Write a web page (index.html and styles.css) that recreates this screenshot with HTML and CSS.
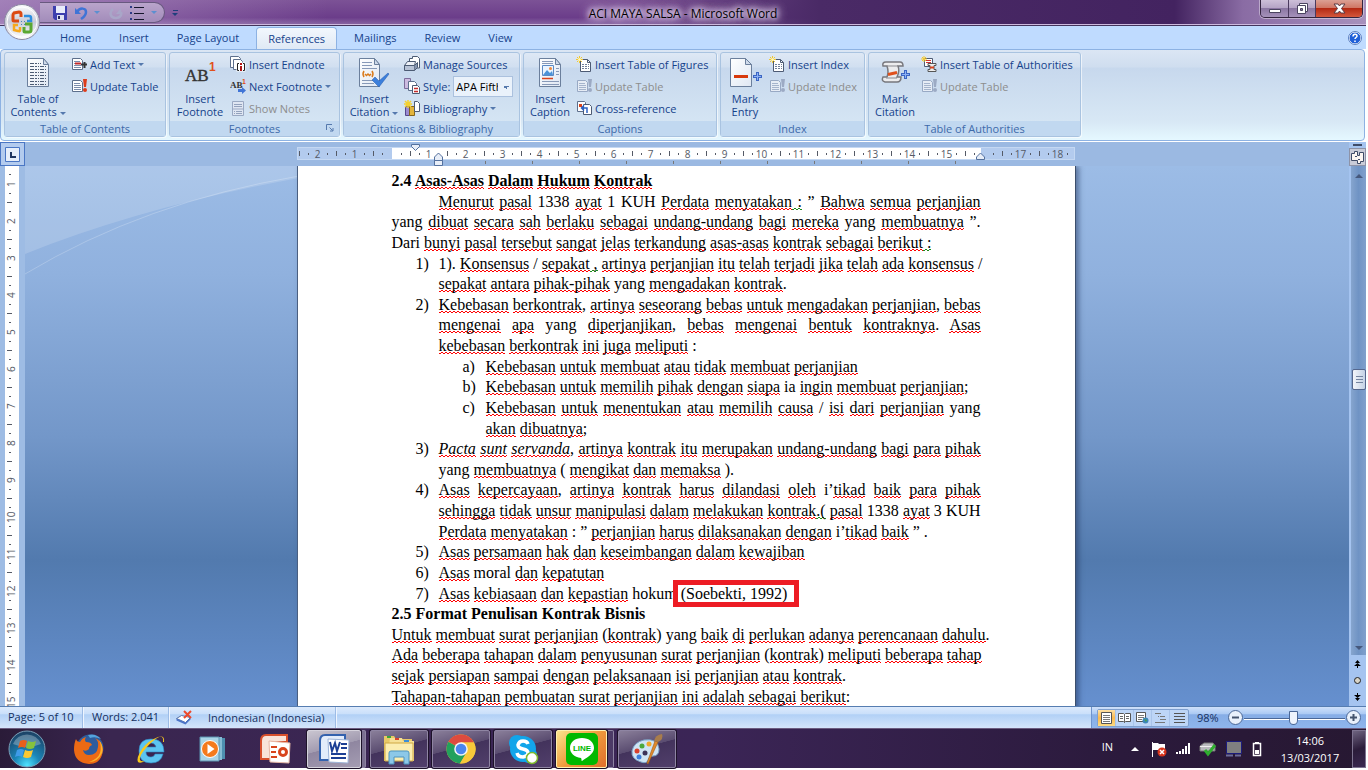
FILE: index.html
```html
<!DOCTYPE html>
<html lang="id">

<head>
    <meta charset="UTF-8">
    <meta name="viewport" content="width=device-width, initial-scale=1.0">
    <title>ACI MAYA SALSA - Microsoft Word</title>
    <link rel="stylesheet" href="styles.css">
</head>

<body>
    <svg class="defs" aria-hidden="true">
        <defs>
            <linearGradient id="g-orb" x1="0" y1="0" x2="0" y2="1">
                <stop offset="0" stop-color="#fdfdfe" /><stop offset=".5" stop-color="#c9ccd8" /><stop offset="1" stop-color="#fff" />
            </linearGradient>
            <radialGradient id="g-start" cx=".5" cy=".95" r=".9">
                <stop offset="0" stop-color="#4fe3ff" /><stop offset=".4" stop-color="#1a86b8" /><stop offset="1" stop-color="#1c4468" />
            </radialGradient>
            <linearGradient id="g-paper" x1="0" y1="0" x2="1" y2="1">
                <stop offset="0" stop-color="#fff" /><stop offset="1" stop-color="#dfe7f3" />
            </linearGradient>
        </defs>
        <symbol id="i-doc32" viewBox="0 0 32 32">
            <path d="M5.500 1.500h16l5 6v22h-21z" fill="url(#g-paper)" stroke="#6b7f9c" />
            <path d="M21.500 1.500v6h5z" fill="#cfdaea" stroke="#6b7f9c" />
        </symbol>
        <symbol id="i-page" viewBox="0 0 16 16">
            <path d="M1.500 2.500h8l2 2v9h-10z" fill="#fff" stroke="#5d6f8c" />
            <path d="M3 5.500h6M3 7.500h7M3 9.500h7M3 11.500h7" stroke="#7b8cab" />
        </symbol>
        <symbol id="i-update" viewBox="0 0 16 16">
            <use href="#i-page" width="16" height="16" />
            <path d="M12 1h4l-1 8h-2z" fill="#dd3c1c" /><circle cx="14" cy="12" r="2" fill="#dd3c1c" />
        </symbol>
        <symbol id="i-update-off" viewBox="0 0 16 16">
            <path d="M1.500 2.500h8l2 2v9h-10z" fill="#e6ecf5" stroke="#98a9c4" />
            <path d="M3 5.500h6M3 7.500h7M3 9.500h7M3 11.500h7" stroke="#a5b4cc" />
            <path d="M12 1h4l-1 8h-2z" fill="#9caac4" /><circle cx="14" cy="12" r="2" fill="#9caac4" />
        </symbol>
        <symbol id="i-newdoc" viewBox="0 0 16 16">
            <path d="M4.500 3.500h7l3 3v9h-10z" fill="#fff" stroke="#4d5b74" />
            <path d="M11.500 3.500v3h3" fill="none" stroke="#4d5b74" />
            <path d="M6 8.500h7M6 10.500h7M6 12.500h7" stroke="#6f7f99" stroke-dasharray="2 1" />
            <path d="M3.500 0v7M0 3.500h7M1 1l5 5M6 1L1 6" stroke="#f4c92f" /><circle cx="3.500" cy="3.500" r="1.500" fill="#fff7b8" />
        </symbol>
    </svg>

    <header class="titlebar">
        <div class="quick">
            <button type="button" aria-label="Save"><svg width="16" height="16" viewBox="0 0 16 16"><path d="M1 1h14v14H3l-2-2z" fill="#3c3fae" /><path d="M4 1h9v7H4z" fill="#e8ecfa" /><path d="M5 10h7v5H5z" fill="#dfe3f2" /><path d="M6 11h2v3H6z" fill="#23245f" /></svg></button>
            <button type="button" aria-label="Undo"><svg width="14" height="16" viewBox="0 0 14 16"><path d="M1 3v6h6z" fill="#3f74d6" /><path d="M3 7c3-5 9-4 9 0 0 3-2 5-5 7" fill="none" stroke="#3f74d6" stroke-width="2.500" /></svg></button>
            <i class="caret pale"></i>
            <button type="button" aria-label="Repeat"><svg width="14" height="16" viewBox="0 0 14 16"><path d="M12 3v6H7z" fill="#a9a6c8" /><path d="M4 4c-4 3-3 9 3 9 4 0 6-3 5-6" fill="none" stroke="#a9a6c8" stroke-width="2.500" /></svg></button>
            <button type="button" aria-label="Bullets"><svg width="16" height="16" viewBox="0 0 16 16"><path d="M5 2.500h10M5 8.500h10M5 14.500h10" stroke="#15152b" /><path d="M1 1h2v2H1zM1 7h2v2H1zM1 13h2v2H1z" fill="#2c3a86" /></svg></button>
            <i class="caret pale"></i>
        </div>
        <button type="button" class="quick-more" aria-label="Customize"><i></i><i class="caret dark"></i></button>
        <div class="title">ACI MAYA SALSA - Microsoft Word</div>
        <div class="winbtns">
            <button type="button" class="min" aria-label="Minimize"><svg width="12" height="16" viewBox="0 0 12 16"><path d="M.5 8.500h11v3H.5z" fill="#fff" stroke="#4b4460" /></svg></button>
            <button type="button" class="max" aria-label="Restore"><svg width="13" height="16" viewBox="0 0 13 16"><path d="M3.500 2.500h8v8h-8z" fill="#fff" stroke="#4b4460" /><path d="M1.500 4.500h8v8h-8z" fill="#fff" stroke="#4b4460" /><path d="M4.500 7.500h2v2h-2z" fill="#8b7aa4" stroke="#4b4460" /></svg></button>
            <button type="button" class="close" aria-label="Close"><svg width="13" height="16" viewBox="0 0 13 16"><path d="M1 3h4l1.500 2L8 3h4L8.500 7.500 12 12H8L6.500 10 5 12H1l3.500-4.500z" fill="#fff" stroke="#5a3a44" /></svg></button>
        </div>
    </header>

    <button type="button" class="office" aria-label="Office">
        <svg width="38" height="38" viewBox="0 0 38 38">
            <circle cx="19" cy="19" r="17.500" fill="url(#g-orb)" stroke="#8a87a0" />
            <circle cx="19" cy="19" r="15" fill="none" stroke="#fff" />
            <path d="M16 18h-5q-1 0-1-1v-5q0-1 1-2l5-1q2 0 2 2v3" fill="none" stroke="#dc4a12" stroke-width="3" />
            <path d="M21 13h5q2 0 2 2v3h-4" fill="none" stroke="#2e8fe0" stroke-width="2.500" />
            <path d="M17 24v3q0 2-2 1l-4-1v-5h4" fill="none" stroke="#f6a81c" stroke-width="2.500" />
            <path d="M22 21h6v6q0 2-2 2h-4q-1 0-1-1v-4" fill="none" stroke="#5aa832" stroke-width="3" />
            <path d="M18 18h1v1h-1zM21 18h1v1h-1zM18 21h1v1h-1zM21 21h1v1h-1z" fill="#4b83b8" />
        </svg>
    </button>

    <nav class="tabs">
        <button type="button">Home</button>
        <button type="button">Insert</button>
        <button type="button">Page Layout</button>
        <button type="button" class="active">References</button>
        <button type="button">Mailings</button>
        <button type="button">Review</button>
        <button type="button">View</button>
        <button type="button" class="help" aria-label="Help"><svg width="14" height="14" viewBox="0 0 14 14"><circle cx="7" cy="7" r="6" fill="#1f5fd8" stroke="#fff" /><circle cx="7" cy="7" r="6.500" fill="none" stroke="#5b7fc0" /><path d="M5 5.500c0-3 4-3 4-.5 0 1.500-2 1.500-2 3M7 9.500V11" fill="none" stroke="#fff" stroke-width="1.500" /></svg></button>
    </nav>

    <section class="ribbon">
        <div class="group toc">
            <div class="tools">
                <button type="button" class="big">
                    <svg width="32" height="32" viewBox="0 0 32 32"><use href="#i-doc32" width="32" height="32" /><path d="M8 6.500h11M8 9.500h16M8 12.500h16M8 15.500h16M8 18.500h16M8 21.500h16M8 24.500h16M8 27.500h16" stroke="#4c5b73" stroke-dasharray="4 1 2 1 1 1" /></svg>
                    <span>Table of<br>Contents <i class="caret"></i></span>
                </button>
                <div class="small">
                    <button type="button"><svg width="16" height="16"><use href="#i-page" /><path d="M4 7.500h6" stroke="#c32b2b" stroke-width="2" /><path d="M10 8.500h6M13.500 6v6" stroke="#333" stroke-width="2" /></svg>Add Text <i class="caret"></i></button>
                    <button type="button"><svg width="16" height="16"><use href="#i-update" /></svg>Update Table</button>
                </div>
            </div>
            <div class="label">Table of Contents</div>
        </div>

        <div class="group footnotes">
            <div class="tools">
                <button type="button" class="big">
                    <svg width="32" height="32" viewBox="0 0 32 32"><text x="1" y="24" class="ab">AB</text><text x="25" y="14" class="one">1</text></svg>
                    <span>Insert<br>Footnote</span>
                </button>
                <div class="small">
                    <button type="button"><svg width="16" height="16"><path d="M.5.500h8l2 2v9H.5z" fill="#fff" stroke="#5d6f8c" /><path d="M3.500 3.500h7l2 2v8h-9z" fill="#fff" stroke="#5d6f8c" /><path d="M6.500 6.500h9v9h-9z" fill="#fff" /><path d="M9 7.500H7.500v7H9M13 7.500h1.500v7H13" fill="none" stroke="#222" /><path d="M11 7v2M11 10v5" stroke="#b01515" stroke-width="2" /></svg>Insert Endnote</button>
                    <button type="button"><svg width="16" height="16"><text x="0" y="10" class="ab-s">AB</text><text x="12" y="6" class="one-s">1</text><path d="M8 11h4V9l4 3.500-4 3.500v-2H8z" fill="#3f74d6" /></svg>Next Footnote <i class="caret"></i></button>
                    <button type="button" disabled><svg width="16" height="16"><path d="M2.500 1.500h11v14h-11z" fill="#dfe6f2" stroke="#9aa9c3" /><path d="M4 4.500h8M4 6.500h8M4 11.500h1M6 11.500h6M4 13.500h1M6 13.500h6" stroke="#93a2bd" /><path d="M3 9h10" stroke="#9aa9c3" /></svg>Show Notes</button>
                </div>
            </div>
            <div class="label">Footnotes<button type="button" class="launcher" aria-label="Footnotes dialog"><svg width="8" height="8" viewBox="0 0 8 8"><path d="M.5 6V.500H6M3.500 3.500l3 3M7 4v3H4" fill="none" stroke="#5579ad" /></svg></button></div>
        </div>

        <div class="group citations">
            <div class="tools">
                <button type="button" class="big">
                    <svg width="32" height="32" viewBox="0 0 32 32"><path d="M1.500 1.500h15l5 6v22h-20z" fill="url(#g-paper)" stroke="#6b7f9c" /><path d="M16.500 1.500v6h5z" fill="#cfdaea" stroke="#6b7f9c" /><path d="M4 5.500h10M4 8.500h10M4 11.500h15M4 23.500h12M4 26.500h12" stroke="#8799b8" /><path d="M6 14q-2 3 0 6M14 14q2 3 0 6M7 17l1.500 1.500L10 17l1.500 1.500L13 17" fill="none" stroke="#d97a1c" stroke-width="1.500" /><path d="M14 23l3-3 4 4 9-8 1 1-10 13z" fill="#3c7fdc" stroke="#2358a8" stroke-width=".5" /></svg>
                    <span>Insert<br>Citation <i class="caret"></i></span>
                </button>
                <div class="small">
                    <button type="button"><svg width="16" height="16"><path d="M5.500 5V2.500h3v-2h5l2 2V12h-4" fill="#fff" stroke="#4c5b73" /><path d="M.5 9.500l3-4h8l-1 4z" fill="#eef1f7" stroke="#4c5b73" /><path d="M.5 9.500h10v5H.5z" fill="#b8c3d6" stroke="#4c5b73" /><path d="M10.500 9.500l3-3v5l-3 3" fill="#8796b0" stroke="#4c5b73" /></svg>Manage Sources</button>
                    <div class="style-row">
                        <label for="cite-style"><svg width="16" height="16"><path d="M.5.500h6v10h-6z" fill="#cdbbe0" stroke="#7d6c9b" /><path d="M4.500 3.500h6l2 2v7h-8z" fill="#fff" stroke="#5d6f8c" /><path d="M8.500 7.500h5l2 2v6h-7z" fill="#fff" stroke="#4d5b74" /><path d="M10 10.500h4M10 13.500h4" stroke="#c32b2b" stroke-width="1.500" /></svg>Style:</label>
                        <select id="cite-style"><option>APA Fifth Edition</option></select>
                    </div>
                    <button type="button"><svg width="16" height="16"><path d="M1.500 6.500h4v9h-4z" fill="#9a8bd0" stroke="#55488c" /><path d="M5.500 6.500h5v9h-5z" fill="#e3b53c" stroke="#86651a" /><path d="M10.500 1.500h3l2 2v8h-5z" fill="#fff" stroke="#4d5b74" /><path d="M4 0v8M0 4h8M1 1l6 6M7 1L1 7" stroke="#f4d12f" stroke-width="1.500" /></svg>Bibliography <i class="caret"></i></button>
                </div>
            </div>
            <div class="label">Citations &amp; Bibliography</div>
        </div>

        <div class="group captions">
            <div class="tools">
                <button type="button" class="big">
                    <svg width="32" height="32" viewBox="0 0 32 32"><use href="#i-doc32" width="32" height="32" /><path d="M8 4.500h11M8 6.500h11M22 11.500h3M22 14.500h3M22 17.500h3M8 24.500h17M8 27.500h17" stroke="#8799b8" /><path d="M8.500 8.500h11v10h-11z" fill="#eaf4ff" stroke="#5c8ac4" /><path d="M9 18l4-5 3 3 2-2 1 4z" fill="#4c93d8" /><circle cx="16.500" cy="11.500" r="1.500" fill="#f08a3c" /><path d="M8 21.500h11" stroke="#d8431c" stroke-width="1.500" /></svg>
                    <span>Insert<br>Caption</span>
                </button>
                <div class="small">
                    <button type="button"><svg width="16" height="16"><use href="#i-newdoc" /></svg>Insert Table of Figures</button>
                    <button type="button" disabled><svg width="16" height="16"><use href="#i-update-off" /></svg>Update Table</button>
                    <button type="button"><svg width="16" height="16"><path d="M1.500 1.500h7l1 1v9h-8z" fill="#fff" stroke="#5d6f8c" /><path d="M3 4h3v3H3z" fill="#d8431c" /><path d="M7.500 4.500h6l2 2v8h-8z" fill="#fff" stroke="#4d5b74" /><path d="M6 8h5v5M8 5.500L5.500 8 8 10.500" fill="none" stroke="#2b62c4" stroke-width="1.500" /></svg>Cross-reference</button>
                </div>
            </div>
            <div class="label">Captions</div>
        </div>

        <div class="group index">
            <div class="tools">
                <button type="button" class="big">
                    <svg width="34" height="32" viewBox="0 0 34 32"><path d="M2.500 1.500h15l6 6v22h-21z" fill="url(#g-paper)" stroke="#6b7f9c" /><path d="M17.500 1.500v6h6z" fill="#cfdaea" stroke="#6b7f9c" /><path d="M6 19.500h14" stroke="#d8390c" stroke-width="3" /><path d="M25 19.500h9M29.500 15v9" stroke="#3c66c4" stroke-width="3" /><path d="M26 19.500h7M29.500 16v7" stroke="#8db1f4" /></svg>
                    <span>Mark<br>Entry</span>
                </button>
                <div class="small">
                    <button type="button"><svg width="16" height="16"><use href="#i-newdoc" /></svg>Insert Index</button>
                    <button type="button" disabled><svg width="16" height="16"><use href="#i-update-off" /></svg>Update Index</button>
                </div>
            </div>
            <div class="label">Index</div>
        </div>

        <div class="group authorities">
            <div class="tools">
                <button type="button" class="big">
                    <svg width="32" height="32" viewBox="0 0 32 32"><path d="M4 9q-1-4 3-4h14q3 0 3 4h-5q2 5-1 11h4q0 5-4 5H6q-4-1-2-5h4q2-5 0-11z" fill="#ececee" stroke="#77777d" stroke-width="1.500" /><path d="M8 9h11M7 21h11" stroke="#8a8a90" /><path d="M9 17.500l9-2" stroke="#e0501c" stroke-width="3" /><path d="M22 17.500h9M26.500 13v9" stroke="#3c66c4" stroke-width="3" /><path d="M23 17.500h7M26.500 14v7" stroke="#8db1f4" /></svg>
                    <span>Mark<br>Citation</span>
                </button>
                <div class="small">
                    <button type="button"><svg width="16" height="16"><path d="M3.500 2.500h8v8h-8z" fill="#fff" stroke="#4d5b74" /><path d="M5 4.500h5M5 6.500h5" stroke="#c33" /><path d="M7 7.500h8v2h-2v4h2v2H7v-2h2v-4H7z" fill="#eee" stroke="#555" /><path d="M9 11.500h4" stroke="#d8431c" stroke-width="2" /><path d="M3 0v6M0 3h6M1 1l4 4M5 1L1 5" stroke="#f4c92f" /></svg>Insert Table of Authorities</button>
                    <button type="button" disabled><svg width="16" height="16"><use href="#i-update-off" /></svg>Update Table</button>
                </div>
            </div>
            <div class="label">Table of Authorities</div>
        </div>
    </section>

    <main class="workspace">
        <div class="left-col">
            <button type="button" class="tab-type" aria-label="Left tab"><svg width="15" height="15" viewBox="0 0 15 15"><path d="M.5.500h14v14H.5z" fill="#e6eefa" stroke="#4a76c4" /><path d="M5 5h2v4h4v2H5z" fill="#1f3560" /></svg></button>
            <div class="vruler"></div>
        </div>
        <div class="mid-col">
            <div class="hruler-row">
                <div class="hruler">
                    <div class="cells"></div>
                    <svg class="stop first" width="9" height="7" viewBox="0 0 9 7"><path d="M.5.500h8v2l-4 4-4-4z" fill="#e8eef8" stroke="#54719e" /></svg>
                    <svg class="stop hanging" width="9" height="14" viewBox="0 0 9 14"><path d="M.5 8.500V5l4-4 4 4v3.500zM.5 8.500h8v5h-8z" fill="#e8eef8" stroke="#54719e" /></svg>
                    <svg class="stop right" width="9" height="8" viewBox="0 0 9 8"><path d="M.5 7.500V5l4-4 4 4v2.500z" fill="#e8eef8" stroke="#54719e" /></svg>
                </div>
            </div>
            <div class="canvas">
                <svg class="swoosh" viewBox="0 0 274 120" preserveAspectRatio="none" aria-hidden="true">
                    <path d="M0 0H274V12Q120 40 0 88z" fill="#fff" opacity=".16" />
                    <path d="M0 108Q120 36 274 10" fill="none" stroke="#fff" opacity=".22" />
                </svg>
                <article class="page">
                    <h2>2.4 Asas-Asas Dalam Hukum Kontrak</h2>
                    <p>
                        <span class="line full first-line">Menurut pasal 1338 ayat 1 KUH Perdata menyatakan<u class="gr"> :</u> ” Bahwa semua perjanjian</span>
                        <span class="line full">yang dibuat secara sah berlaku sebagai undang-undang bagi mereka yang membuatnya ”.</span>
                        <span class="line">Dari bunyi pasal tersebut sangat jelas terkandung asas-asas kontrak sebagai berikut<u class="gr"> :</u></span>
                    </p>
                    <div class="list">
                        <div class="item"><span class="num">1)</span>
                            <p><span class="line full">1). Konsensus / sepakat<u class="gr"> ,</u> artinya perjanjian itu telah terjadi jika telah ada konsensus /</span>
                                <span class="line">sepakat antara pihak-pihak yang mengadakan kontrak.</span></p>
                        </div>
                        <div class="item"><span class="num">2)</span>
                            <p><span class="line full">Kebebasan berkontrak, artinya seseorang bebas untuk mengadakan perjanjian, bebas</span>
                                <span class="line full">mengenai apa yang diperjanjikan, bebas mengenai bentuk kontraknya. Asas</span>
                                <span class="line">kebebasan berkontrak ini juga meliputi :</span></p>
                        </div>
                        <div class="list sub">
                            <div class="item"><span class="num">a)</span><p><span class="line">Kebebasan untuk membuat atau tidak membuat perjanjian</span></p></div>
                            <div class="item"><span class="num">b)</span><p><span class="line">Kebebasan untuk memilih pihak dengan siapa ia ingin membuat perjanjian;</span></p></div>
                            <div class="item"><span class="num">c)</span>
                                <p><span class="line full">Kebebasan untuk menentukan atau memilih causa / isi dari perjanjian yang</span>
                                    <span class="line">akan dibuatnya;</span></p>
                            </div>
                        </div>
                        <div class="item"><span class="num">3)</span>
                            <p><span class="line full"><em>Pacta sunt servanda</em>, artinya kontrak itu merupakan undang-undang bagi para pihak</span>
                                <span class="line">yang membuatnya ( mengikat dan memaksa ).</span></p>
                        </div>
                        <div class="item"><span class="num">4)</span>
                            <p><span class="line full">Asas kepercayaan, artinya kontrak harus dilandasi oleh i’tikad baik para pihak</span>
                                <span class="line full">sehingga tidak unsur manipulasi dalam melakukan kontrak<u class="gr">.(</u> pasal 1338 ayat 3 KUH</span>
                                <span class="line">Perdata menyatakan : ” perjanjian harus dilaksanakan dengan i’tikad baik ” .</span></p>
                        </div>
                        <div class="item"><span class="num">5)</span><p><span class="line">Asas persamaan hak dan keseimbangan dalam kewajiban</span></p></div>
                        <div class="item"><span class="num">6)</span><p><span class="line">Asas moral dan kepatutan</span></p></div>
                        <div class="item"><span class="num">7)</span><p><span class="line">Asas kebiasaan dan kepastian hokum <span class="boxed nospell">(Soebekti, 1992)</span></span></p></div>
                    </div>
                    <h2 class="nospell">2.5 Format Penulisan Kontrak Bisnis</h2>
                    <p>
                        <span class="line full">Untuk membuat surat perjanjian (kontrak) yang baik di perlukan adanya perencanaan dahulu.</span>
                        <span class="line full">Ada beberapa tahapan dalam penyusunan surat perjanjian (kontrak) meliputi beberapa tahap</span>
                        <span class="line">sejak persiapan sampai dengan pelaksanaan isi perjanjian atau kontrak.</span>
                        <span class="line">Tahapan-tahapan pembuatan surat perjanjian ini adalah sebagai berikut:</span>
                    </p>
                </article>
            </div>
        </div>
        <div class="scroll-col">
            <div class="split"></div>
            <button type="button" class="ruler-btn" aria-label="View ruler"><svg width="13" height="13" viewBox="0 0 13 13"><path d="M.5 2.500h3v-2h3v4h2v-3h4v9h-3v2h-3v-3h-6z" fill="#fbf6f2" stroke="#3f4c68" /><path d="M4 5.500h2M7 8.500h2" stroke="#3f4c68" /></svg></button>
            <div class="track">
                <button type="button" class="arrow" aria-label="Scroll up"><i class="caret up"></i></button>
                <div class="before"></div>
                <div class="thumb"></div>
                <div class="after"></div>
                <button type="button" class="arrow" aria-label="Scroll down"><i class="caret"></i></button>
            </div>
            <div class="browse">
                <button type="button" aria-label="Previous page"><svg width="7" height="8" viewBox="0 0 7 8"><path d="M1 3l2.500-3L6 3zM0 6l3.500-3L7 6z" /><path d="M3 5h1v3H3z" /></svg></button>
                <button type="button" aria-label="Select browse object"><svg width="7" height="7" viewBox="0 0 7 7"><circle cx="3.500" cy="3.500" r="3" fill="#d9d5c8" stroke="#222" /></svg></button>
                <button type="button" aria-label="Next page"><svg width="7" height="8" viewBox="0 0 7 8"><path d="M0 2l3.500 3L7 2zM1 5l2.500 3L6 5z" /><path d="M3 0h1v3H3z" /></svg></button>
            </div>
        </div>
    </main>

    <footer class="status">
        <div class="cell c-page">Page: 5 of 10</div>
        <div class="cell c-words">Words: 2.041</div>
        <div class="cell c-lang"><svg width="17" height="15" viewBox="0 0 17 15"><path d="M.5 8.500l5-3 9 2-5 5z" fill="#fff" stroke="#5873a8" /><path d="M.5 8.500v2l9 4 5-5v-2l-5 5z" fill="#4b74c8" /><path d="M8 1l7 7M15 1L8 8" stroke="#ec4a2c" stroke-width="2" /></svg><span>Indonesian (Indonesia)</span></div>
        <div class="fill"></div>
        <div class="status-right">
            <div class="views">
                <button type="button" class="on" aria-label="Print Layout"><svg width="13" height="12" viewBox="0 0 13 12"><path d="M1.500.500h10v11h-10z" fill="#fff" stroke="#555" /><path d="M3 3.500h7M3 5.500h7M3 7.500h7M3 9.500h7" stroke="#777" /></svg></button>
                <button type="button" aria-label="Full Screen Reading"><svg width="13" height="12" viewBox="0 0 13 12"><path d="M.5 1.500h5l1 1 1-1h5v8h-5l-1 1-1-1h-5z" fill="#fff" stroke="#555" /><path d="M6.500 2v9M2 4.500h3M2 6.500h3M8 4.500h3M8 6.500h3" stroke="#666" /></svg></button>
                <button type="button" aria-label="Web Layout"><svg width="13" height="12" viewBox="0 0 13 12"><path d="M.5.500h9v9h-9z" fill="#fff" stroke="#555" /><path d="M2 3.500h6M2 5.500h6M2 7.500h4" stroke="#777" /><circle cx="9.500" cy="8.500" r="3" fill="#3c86b8" /><path d="M8 7l3 1-1 2z" fill="#49a348" /></svg></button>
                <button type="button" aria-label="Outline"><svg width="13" height="12" viewBox="0 0 13 12"><path d="M1 1.500h6M4 4.500h1M6 4.500h5M6 7.500h6M1 10.500h10" stroke="#777" /></svg></button>
                <button type="button" aria-label="Draft"><svg width="13" height="12" viewBox="0 0 13 12"><path d="M1 1.500h11M1 4.500h11M1 7.500h11M1 10.500h11" stroke="#555" /></svg></button>
            </div>
            <label class="zoom-val" for="zoom">98%</label>
            <button type="button" class="zbtn" aria-label="Zoom out"><svg width="17" height="17" viewBox="0 0 17 17"><circle cx="8.500" cy="8.500" r="7" fill="#e8f0fb" stroke="#4a6797" /><path d="M5 8.500h7" stroke="#44546e" stroke-width="2" /></svg></button>
            <input type="range" id="zoom" min="10" max="190" value="98">
            <button type="button" class="zbtn" aria-label="Zoom in"><svg width="17" height="17" viewBox="0 0 17 17"><circle cx="8.500" cy="8.500" r="7" fill="#e8f0fb" stroke="#4a6797" /><path d="M5 8.500h7M8.500 5v7" stroke="#44546e" stroke-width="2" /></svg></button>
        </div>
    </footer>

    <div class="taskbar">
        <button type="button" class="start" aria-label="Start"><svg width="38" height="38" viewBox="0 0 38 38"><circle cx="19" cy="19" r="18" fill="url(#g-start)" stroke="#7ba0b8" /><path d="M5 14a15 15 0 0 1 28 0Q19 20 5 14z" fill="#fff" opacity=".28" /><path d="M12 11q4-2 7 0l-2 7q-3-2-7 0z" fill="#e8601c" /><path d="M20 11q4 2 8 0l-2 7q-4 2-8 0z" fill="#86c23c" /><path d="M9 20q4-2 7 0l-2 7q-3-2-7 0z" fill="#3f9be8" /><path d="M17 20q4 2 8 0l-2 7q-4 2-8 0z" fill="#fbc832" /></svg></button>
        <button type="button" class="pin" aria-label="Firefox"><svg width="32" height="32" viewBox="0 0 32 32"><circle cx="17" cy="15" r="13.500" fill="#2d5c9e" /><path d="M15 2q8-2 13 4-6-3-11-1z" fill="#54a3dc" /><path d="M3 6q1 3 4 3 2-4 6-5-2 3 0 5 5 0 6 3-3 1-3 4-3 3-6 1 1 5 6 5 8 0 9-8 1-6-3-9 7 3 8 11-1 15-14 15Q2 30 1 17 1 10 3 6z" fill="#ec6a14" /><path d="M26 7q5 6 3 13-4 9-13 9 9-3 11-9 2-7-1-13z" fill="#fbb52c" /></svg></button>
        <button type="button" class="pin" aria-label="Internet Explorer"><svg width="32" height="32" viewBox="0 0 32 32"><path d="M28 21h-8q-1 3-4 3-5 0-5-5h18q0-13-13-13Q4 6 4 18t12 12q10 0 12-9zM11 14q1-4 5-4 4 0 5 4z" fill="#5cc4f0" stroke="#2b86c4" stroke-width=".6" /><path d="M29 9q1-7-6-5Q14 7 7 16q-6 9-4 13 2 2 7-1-4 1-5-1-1-4 6-12Q18 7 24 4q5-1 4 5z" fill="#f8c81c" /></svg></button>
        <button type="button" class="pin" aria-label="Media Player"><svg width="30" height="30" viewBox="0 0 30 30"><path d="M20 4h7v21h-7z" fill="#4d8fb0" /><path d="M15 3h9v23h-9z" fill="#86bcd4" /><path d="M2 3h19v24H2z" fill="#a9d4e6" stroke="#5b93b0" /><circle cx="12" cy="15" r="8.500" fill="#f47a1c" stroke="#fff" /><path d="M9.500 10l7 5-7 5z" fill="#fff" /></svg></button>
        <button type="button" class="pin" aria-label="PowerPoint"><svg width="32" height="32" viewBox="0 0 32 32"><path d="M7 2h21v7H13v17H2V8q0-6 5-6z" fill="#f9e3d8" stroke="#d8502c" stroke-width="2" /><path d="M10 8l21 2-1 20-19-1z" fill="#fff" stroke="#e7b8a6" /><path d="M12 14h6M12 19h5M12 24h6" stroke="#d8441c" stroke-width="2" /><circle cx="24" cy="19" r="3.500" fill="none" stroke="#d8441c" stroke-width="3" /></svg></button>
        <button type="button" class="task word" aria-label="Word"><svg width="32" height="32" viewBox="0 0 32 32"><path d="M7 2h20v7H12v18H2V8q0-6 5-6z" fill="#e3ecfa" stroke="#3462ae" stroke-width="2" /><path d="M10 6l21 1-1 23-19-1z" fill="#fff" stroke="#9db4d8" /><path d="M12 9l2 9 3-8 2 8 3-9" fill="none" stroke="#1c3f94" stroke-width="2" /><path d="M23 11h6M23 15h6M13 21h15M13 25h15" stroke="#1c3f94" stroke-width="2" /></svg></button>
        <span class="stack"></span>
        <button type="button" class="task" aria-label="Explorer"><svg width="34" height="32" viewBox="0 0 34 32"><path d="M2 3h10l2 3h16v22H2z" fill="#e8c866" /><path d="M8 5h12l1 3h11v20H5z" fill="#f6e096" /><path d="M3 10h28v18H3z" fill="#fbedb0" stroke="#cfa844" /><path d="M5 3h4v2H5z" fill="#3ba53b" /><path d="M13 5h4v2h-4z" fill="#d8442c" /><path d="M22 7h5v2h-5z" fill="#3c8fd8" /><path d="M7 31V20q0-2 2-2h16q2 0 2 2v11h-5v-7H12v7z" fill="#8cc8e8" stroke="#4d94c0" /></svg></button>
        <button type="button" class="task" aria-label="Chrome"><svg width="30" height="30" viewBox="0 0 30 30"><circle cx="15" cy="15" r="14.500" fill="#f8c93a" /><path d="M15 15L2.400 7.700A14.500 14.500 0 0 1 28 8.500H15z" fill="#dd4b3e" /><path d="M15 15L2.400 7.700A14.500 14.500 0 0 0 14 29.500l6-10z" fill="#22a15c" /><path d="M15 8.500h13A14.500 14.500 0 0 1 14 29.500l6.600-11z" fill="#f8c93a" /><circle cx="15" cy="15" r="6.800" fill="#f4f4f4" /><circle cx="15" cy="15" r="5.300" fill="#4a86ee" /></svg></button>
        <button type="button" class="task" aria-label="Skype"><svg width="32" height="32" viewBox="0 0 32 32"><circle cx="10" cy="10" r="8" fill="#12a5ea" /><circle cx="22" cy="22" r="8" fill="#12a5ea" /><circle cx="16" cy="16" r="13" fill="#12a5ea" /><path d="M21 11q-1-3-5-3t-5 4q0 3 5 4t5 4-5 4q-5 0-6-4" fill="none" stroke="#fff" stroke-width="3.500" /><circle cx="25" cy="25" r="5.500" fill="#fff" stroke="#7db92c" stroke-width="1.500" /></svg></button>
        <button type="button" class="task line-app" aria-label="LINE"><svg width="32" height="32" viewBox="0 0 32 32"><rect width="32" height="32" rx="5" fill="#00b800" /><path d="M16 5c7 0 12 4 12 10 0 6-8 10-12 13-1 0 0-2-1-3C8 24 4 20 4 15 4 9 9 5 16 5z" fill="#fff" /><text x="16" y="18" text-anchor="middle" class="line-logo">LINE</text></svg></button>
        <span class="stack double"></span>
        <button type="button" class="task" aria-label="Paint"><svg width="34" height="32" viewBox="0 0 34 32"><path d="M14 7q14-2 15 9 0 7-6 7-4 0-5 4-1 4-7 2Q1 26 2 18 4 9 14 7z" fill="#cfe4f4" stroke="#7ba4c8" /><circle cx="15" cy="20" r="2.500" fill="#3b3358" /><circle cx="7" cy="18" r="2.500" fill="#d8402c" /><circle cx="12" cy="13" r="2.500" fill="#4ca83c" /><circle cx="19" cy="11" r="2.500" fill="#f0a82c" /><circle cx="9" cy="24" r="2.500" fill="#3c7fdc" /><path d="M25 8l3 1-10 22-1-1z" fill="#e08a2c" stroke="#a05a14" stroke-width=".6" /><path d="M24 8q1-6 8-7 2 5-4 8z" fill="#a87c4c" /></svg></button>
        <div class="fill"></div>
        <div class="tray">
            <span class="lang">IN</span>
            <i class="caret up white"></i>
            <svg width="16" height="16" viewBox="0 0 16 16"><path d="M1.500 1v15" stroke="#fff" /><path d="M2 2h5l1 1h6v7H8L7 9H2z" fill="#fff" /><circle cx="11" cy="11" r="4.500" fill="#d8341c" /><path d="M9 9l4 4M13 9l-4 4" stroke="#fff" stroke-width="1.500" /></svg>
            <svg width="16" height="16" viewBox="0 0 16 16"><path d="M1 11h2v2H1zM4 10h2v3H4zM7 8h2v5H7zM10 5h2v8h-2zM13 2h2v11h-2z" fill="#fff" /></svg>
            <svg width="18" height="16" viewBox="0 0 18 16"><path d="M1 5l4-3h9l2 3v5H1z" fill="#b9b9bd" stroke="#777" /><path d="M1 5.500h15" stroke="#eee" /><path d="M6 9l3 4 7-9" fill="none" stroke="#2fae2f" stroke-width="3" /></svg>
            <svg width="18" height="16" viewBox="0 0 18 16"><path d="M1.500.500h15v12h-15z" fill="#808080" stroke="#1b1b7c" /><path d="M1 14.500h7M10 14.500h6" stroke="#6c6c9c" stroke-width="2" /></svg>
            <svg width="12" height="16" viewBox="0 0 12 16"><path d="M4 1h4v1H4z" fill="#fff" /><path d="M2.500 2.500h7v12h-7z" fill="none" stroke="#fff" stroke-width="1.500" /><path d="M4 9h4v4H4z" fill="#fff" /></svg>
            <div class="clock">14:06<br>13/03/2017</div>
        </div>
        <button type="button" class="desktop" aria-label="Show desktop"></button>
    </div>
    <script src="script.js"></script>
</body>

</html>
```
FILE: styles.css
```css
* {
    margin: 0;
    padding: 0;
    box-sizing: border-box;
}

html {
    height: 100%;
}

body {
    position: relative;
    display: flex;
    flex-direction: column;
    height: 100vh;
    padding: 0 2px 2px 0;
    overflow: hidden;
    background: #fff;
    font-family: "Open Sans", "Noto Sans", sans-serif;
    font-size: 11px;
    color: #15428b;
}

button {
    border: none;
    background: none;
    font: inherit;
    color: inherit;
    white-space: nowrap;
}

svg {
    flex: none;
    display: block;
}

.defs {
    position: absolute;
    width: 0;
    height: 0;
}

.caret {
    display: inline-block;
    border: 3px solid transparent;
    border-top-color: #5579ad;
    border-bottom: none;
    vertical-align: middle;
}

.caret.pale {
    border-top-color: #5b8fd0;
}

.caret.dark {
    border-top-color: #1f3e7c;
}

.caret.up {
    border: 4px solid transparent;
    border-bottom-color: #46587c;
    border-top: none;
}

.caret.white {
    border-bottom-color: #fff;
}

.fill {
    flex: 1;
}

/* title bar */
.titlebar {
    position: relative;
    display: flex;
    flex: none;
    height: 26px;
    padding-left: 40px;
    border-bottom: 1px solid #43345c;
    box-shadow: inset 0 -1px #cdb9de;
    background: linear-gradient(90deg, rgba(188, 160, 208, .6), rgba(150, 110, 180, 0) 24%, rgba(120, 70, 150, 0) 46%, #4a2a66 60%, #432360 86%, #8a6ca4 91%, #a791bd), linear-gradient(#7c5296, #6b3d8a 70%, #8a68a4);
}

.quick {
    display: flex;
    align-items: center;
    width: 125px;
    height: 21px;
    margin-top: 2px;
    padding-left: 12px;
    border: 1px solid #68597f;
    border-left: none;
    border-radius: 0 11px 11px 0;
    background: linear-gradient(#b9a4cb, #a28cba);
}

.quick button {
    margin-right: 6px;
}

.quick button + .caret {
    margin-right: 9px;
}

.quick-more {
    display: flex;
    flex-direction: column;
    align-items: center;
    justify-content: center;
    gap: 2px;
    width: 20px;
}

.quick-more i:first-child {
    width: 5px;
    height: 1px;
    background: #1f3e7c;
}

.title {
    position: absolute;
    left: 0;
    right: 0;
    top: 5px;
    font-size: 12px;
    line-height: 17px;
    text-align: center;
    color: #000;
    text-shadow: 0 0 5px #e9dcf2, 0 0 6px #e9dcf2, 0 0 8px #e9dcf2, 0 0 12px #d8c4e6, 0 0 12px #d8c4e6;
    pointer-events: none;
}

.winbtns {
    display: flex;
    height: 18px;
    margin-left: auto;
    margin-right: 3px;
    border: 1px solid #33243f;
    border-top: none;
    border-radius: 0 0 5px 5px;
    box-shadow: 0 0 0 1px rgba(255, 255, 255, .4);
    overflow: hidden;
}

.winbtns button {
    display: flex;
    align-items: center;
    justify-content: center;
    width: 28px;
    border-right: 1px solid #4b3a5e;
    background: linear-gradient(#cdbfd8, #b3a2c4 50%, #8b76a2 50%, #a592ba);
}

.winbtns .max {
    width: 27px;
}

.winbtns .close {
    width: 46px;
    border-right: none;
    background: linear-gradient(#dba094, #cf7360 50%, #b42a14 50%, #d4573c);
}

.office {
    position: absolute;
    left: 3px;
    top: 3px;
    z-index: 2;
}

/* ribbon */
.tabs {
    display: flex;
    flex: none;
    height: 23px;
    padding: 1px 4px 0 46px;
    background: #bfdbff;
}

.tabs button {
    padding: 0 14px;
    line-height: 22px;
}

.tabs .active {
    position: relative;
    z-index: 1;
    margin: 0 3px;
    padding: 0 11px;
    border: 1px solid #8db2e3;
    border-bottom: none;
    border-radius: 4px 4px 0 0;
    line-height: 21px;
    background: linear-gradient(#f2f7fd, #dfe9f5);
}

.tabs .help {
    margin-left: auto;
    padding: 0;
}

.ribbon {
    display: flex;
    gap: 3px;
    flex: none;
    height: 92px;
    margin: 0 1px 1px 0;
    padding: 2px 2px 3px 3px;
    border: 1px solid #8db2e3;
    border-radius: 4px;
    background: linear-gradient(#dbe6f4, #cfddef 19%, #c7d8ed 20%, #d8e8f5 80%, #e5f8ff);
}

.group {
    display: flex;
    flex-direction: column;
    border: 1px solid #a9c3e0;
    border-radius: 3px;
    background: linear-gradient(#dee8f5, #d1dff0 17%, #c7d8ed 18%, #d8e8f5);
    box-shadow: 1px 1px rgba(255, 255, 255, .6);
}

.toc { width: 162px; }
.footnotes { width: 171px; }
.citations { width: 177px; }
.captions { width: 194px; }
.index { width: 145px; }
.authorities { width: 213px; }

.tools {
    display: flex;
    flex: 1;
}

.big {
    display: flex;
    flex-direction: column;
    align-items: center;
    gap: 3px;
    width: 52px;
    padding-top: 4px;
    line-height: 13px;
}

.toc .big { width: 66px; }
.footnotes .big,
.citations .big { width: 60px; }
.index .big { width: 48px; }

.small {
    display: flex;
    flex-direction: column;
    align-items: flex-start;
}

.small button,
.small label,
.style-row {
    display: flex;
    align-items: center;
    gap: 3px;
    height: 22px;
}

.small button:disabled {
    color: #8d8d8d;
}

.small select {
    width: 60px;
    height: 21px;
    padding: 0 14px 0 2px;
    border: 1px solid #abc1de;
    appearance: none;
    font: inherit;
    color: #000;
    background: linear-gradient(135deg, #5579ad 50%, transparent 50%) 52px 9px / 3px 3px no-repeat, linear-gradient(225deg, #5579ad 50%, transparent 50%) 49px 9px / 3px 3px no-repeat, #eaf2fb;
}

.label {
    position: relative;
    height: 15px;
    line-height: 15px;
    text-align: center;
    color: #3e6aaa;
    background: #c1d8f0;
}

.launcher {
    position: absolute;
    right: 5px;
    top: 3px;
}

.ab {
    font: 17px "Liberation Serif", serif;
    fill: #333;
    stroke: #333;
    stroke-width: .4px;
}

.one {
    font: bold 12px "Liberation Sans", sans-serif;
    fill: #e0501c;
}

.ab-s {
    font: bold 9px "Liberation Serif", serif;
    fill: #333;
}

.one-s {
    font: bold 7px "Liberation Sans", sans-serif;
    fill: #e0501c;
}

/* workspace */
.workspace {
    display: flex;
    flex: 1;
    min-height: 0;
    background: #9ebce4;
}

.left-col {
    display: flex;
    flex-direction: column;
    width: 25px;
    background: #9ebce4;
}

.tab-type {
    display: flex;
    align-items: center;
    justify-content: center;
    flex: none;
    height: 24px;
    border: 1px solid #4a76c4;
    background: #b3cbee;
}

.vruler {
    flex: 1;
    min-height: 0;
    margin: 0 6px 0 5px;
    overflow: hidden;
    background: #fff;
}

.tick {
    display: flex;
    align-items: center;
    justify-content: center;
    flex: none;
    font-size: 10px;
    line-height: 12px;
    color: #555a66;
}

.vruler .tick {
    height: 37px;
    writing-mode: vertical-rl;
    transform: rotate(180deg);
    background: linear-gradient(#555a66, #555a66) 5px 0 / 5px 1px no-repeat, linear-gradient(#555a66, #555a66) 6px 9px / 2px 1px no-repeat, linear-gradient(#555a66, #555a66) 6px 28px / 2px 1px no-repeat;
}

.mid-col {
    display: flex;
    flex-direction: column;
    flex: 1;
    min-width: 0;
}

.hruler-row {
    flex: none;
    height: 24px;
    padding: 5px 2px 0 0;
    background: #9bb9e2;
}

.hruler {
    position: relative;
    width: 778px;
    height: 19px;
    margin: 0 auto;
    background: repeating-linear-gradient(90deg, #777 0 1px, transparent 1px 47px) 188px 14px / 471px 3px no-repeat;
}

.cells {
    display: flex;
    height: 13px;
    padding-left: 1px;
    border: 1px solid #c4d8f3;
    background: linear-gradient(90deg, #b3cbee 94px, #fff 94px 683px, #b3cbee 683px);
    overflow: hidden;
}

.cells .tick {
    width: 37px;
    background: linear-gradient(#555a66, #555a66) 0 3px / 1px 5px no-repeat, linear-gradient(#555a66, #555a66) 9px 5px / 1px 2px no-repeat, linear-gradient(#555a66, #555a66) 28px 5px / 1px 2px no-repeat;
}

.stop {
    position: absolute;
}

.stop.first {
    left: 114px;
    top: -3px;
}

.stop.hanging {
    left: 137px;
    top: 5px;
}

.stop.right {
    left: 679px;
    top: 5px;
}

.canvas {
    position: relative;
    display: flex;
    justify-content: center;
    flex: 1;
    min-height: 0;
    padding-right: 2px;
    overflow: hidden;
    background: linear-gradient(#9cbce6, #90b1de 20%, #7397c9 50%, #527aae 73%, #6690cf);
}

.swoosh {
    position: absolute;
    left: 0;
    top: 0;
    width: 274px;
    height: 120px;
}

.page {
    position: relative;
    width: 779px;
    height: 800px;
    flex: none;
    padding: 5px 94px 0;
    border-left: 1px solid #4a5f80;
    border-right: 1px solid #3d4f6c;
    background: #fff;
    box-shadow: 3px 0 5px rgba(30, 50, 90, .5);
    font-family: "Liberation Serif", "Times New Roman", serif;
    font-size: 16px;
    line-height: 1.29;
    color: #000;
}

.page h2 {
    font-size: 16px;
    font-weight: bold;
}

.line {
    display: block;
    white-space: nowrap;
}

.full {
    text-align: justify;
    text-align-last: justify;
}

.first-line {
    padding-left: 47px;
}

.page .list {
    padding-left: 24px;
}

.item {
    display: flex;
}

.item p {
    flex: 1;
    min-width: 0;
}

.num {
    width: 23px;
}

.page .sub {
    padding-left: 47px;
}

/* zigzag under misspelled words */
.page u {
    --wave: #f00;
    text-decoration: none;
    background: linear-gradient(90deg, var(--wave) 50%, transparent 50%) 0 100% / 4px 1px repeat-x, linear-gradient(90deg, transparent 50%, var(--wave) 50%) 0 calc(100% - 1px) / 4px 1px repeat-x;
}

.page .gr {
    --wave: #1c8a1c;
}

.boxed {
    position: relative;
}

.boxed::after {
    content: "";
    position: absolute;
    inset: -5px -12px -5px -8px;
    border: 5px solid #ed1c24;
}

/* scroll bar */
.scroll-col {
    display: flex;
    flex-direction: column;
    width: 17px;
    background: #a5c4f0;
}

.split {
    flex: none;
    height: 2px;
    margin: 2px 4px;
    background: #3f4c68;
}

.ruler-btn {
    display: flex;
    align-items: center;
    justify-content: center;
    flex: none;
    height: 18px;
    border: 1px solid #8d93a8;
    background: #c9ccd8;
}

.track {
    display: flex;
    flex-direction: column;
    align-items: center;
    flex: 1;
    margin-left: 2px;
    background: linear-gradient(90deg, #86a5ce, #6f93c4 50%, #80a0cc);
}

.track .caret {
    border: 4px solid transparent;
    border-top-color: #46587c;
    border-bottom: none;
}

.track .up {
    border-top: none;
    border-bottom: 4px solid #46587c;
}

.arrow {
    height: 17px;
    line-height: 12px;
}

.before {
    flex: 3;
}

.after {
    flex: 4;
}

.thumb {
    width: 14px;
    height: 21px;
    border: 1px solid #54678e;
    border-radius: 2px;
    background: repeating-linear-gradient(#7484a0 0 1px, transparent 1px 3px) 3px 6px / 7px 7px no-repeat, linear-gradient(90deg, #f2f5fa, #c4d2e6);
}

.browse {
    display: flex;
    flex-direction: column;
    align-items: center;
    justify-content: space-around;
    height: 51px;
}

/* status bar */
.status {
    display: flex;
    flex: none;
    height: 22px;
    border-top: 1px solid #567db1;
    background: linear-gradient(#dceafc, #c9dffa 35%, #b1d0f6 36%, #d4e5fb);
    color: #15305f;
}

.cell {
    height: 21px;
    line-height: 19px;
    border-right: 1px solid #9dbce6;
    box-shadow: 1px 0 #eef5ff;
    white-space: nowrap;
}

.c-page {
    width: 83px;
    padding-left: 8px;
}

.c-words {
    width: 86px;
    padding-left: 9px;
}

.c-lang {
    display: flex;
    align-items: center;
    gap: 15px;
    width: 167px;
    padding-left: 7px;
}

.status-right {
    display: flex;
    align-items: center;
    padding: 0 4px 0 5px;
    border-left: 1px solid #6f94cc;
    background: linear-gradient(#cfe1fa, #a9c8f3 35%, #86ade6 36%, #8fb6ec);
}

.views {
    display: flex;
    height: 18px;
    margin-right: 8px;
    border: 1px solid #7f9fce;
    border-radius: 2px;
    background: #bdd5f6;
}

.views button {
    display: flex;
    align-items: center;
    justify-content: center;
    width: 18px;
    border-right: 1px solid #a9c4ea;
}

.views button:last-child {
    border-right: none;
}

.views .on {
    background: linear-gradient(#fde0a4, #fbb84c 50%, #fddc86);
}

.zoom-val {
    width: 30px;
}

.zbtn {
    width: 17px;
}

#zoom {
    width: 101px;
    height: 16px;
    appearance: none;
    background: linear-gradient(#4a6797, #4a6797) 0 8px / 100% 1px no-repeat, linear-gradient(#fff, #fff) 0 9px / 100% 1px no-repeat;
}

#zoom::-webkit-slider-thumb {
    appearance: none;
    width: 9px;
    height: 14px;
    background: #eef4fd;
    border: 1px solid #4a6797;
    border-radius: 1px 1px 5px 5px;
}

/* taskbar */
.taskbar {
    display: flex;
    align-items: center;
    flex: none;
    height: 40px;
    padding-left: 8px;
    border-top: 1px solid #6b5c80;
    background: linear-gradient(90deg, #2a1b38, #3a2650 8%, #3b2556 52%, #2b1a3c 82%, #271832);
}

.start {
    width: 50px;
}

.pin {
    display: flex;
    align-items: center;
    justify-content: center;
    width: 62px;
}

.task {
    display: flex;
    align-items: center;
    justify-content: center;
    width: 58px;
    height: 38px;
    margin-right: 4px;
    border: 1px solid #8f85a3;
    border-radius: 2px;
    box-shadow: 0 0 0 1px #1d1229;
    background: linear-gradient(165deg, #8a7f9a, #5a4c70 45%, #43335c 46%, #513f6b);
}

.word {
    width: 54px;
    margin-left: 1px;
    margin-right: 1px;
    background: linear-gradient(165deg, #c9c5d0, #a29bb0 45%, #8f86a0 46%, #a49cb2);
    border-color: #d5d2dc;
}

.line-app {
    width: 51px;
    margin-right: 1px;
    background: linear-gradient(135deg, #fbe48c, #ef9a3c 50%, #e0702c);
    border-color: #fff0b0;
}

.line-logo {
    font: bold 8px "Liberation Sans", sans-serif;
    fill: #00b800;
}

.stack {
    width: 4px;
    height: 38px;
    margin-right: 4px;
    border: 1px solid #8f85a3;
    border-left: none;
    border-radius: 0 2px 2px 0;
    background: #7b7090;
}

.double {
    width: 6px;
    background: #4c3a66;
}

.tray {
    display: flex;
    align-items: center;
    gap: 8px;
    color: #fff;
}

.lang {
    margin: 0 10px 4px 0;
}

.tray .caret {
    margin-right: 4px;
}

.clock {
    width: 66px;
    margin: 0 9px 0 6px;
    line-height: 17px;
    text-align: center;
}

.desktop {
    width: 14px;
    height: 38px;
    border: 1px solid #7d7390;
    background: linear-gradient(160deg, #6e6480, #2b1c3a 50%, #3b2850);
}
```
FILE: script.js
```js
// rulers
var cells = document.querySelector('.cells')
var vruler = document.querySelector('.vruler')

var addTick = function (parent, text) {
    var tick = document.createElement('span')
    tick.className = 'tick'
    tick.textContent = text
    parent.appendChild(tick)
}

for (var i = -2; i <= 18; i++) {
    // 0 is the margin, 16 sits under the right indent
    addTick(cells, i == 0 || i == 16 ? '' : Math.abs(i))
}
for (var j = 1; j <= 15; j++) {
    addTick(vruler, j)
}

// spell check marks
var known = ['yang', 'KUH', 'hokum', 'Dari', 'ia', 'i', 'moral']

var mark = function (node) {
    if (node.nodeType == 3) {
        var parts = node.textContent.split(/([A-Za-z]+(?:-[A-Za-z]+)*)/)
        var frag = document.createDocumentFragment()
        parts.forEach(function (part, index) {
            if (index % 2 == 1 && known.indexOf(part) == -1) {
                var u = document.createElement('u')
                u.textContent = part
                frag.appendChild(u)
            } else {
                frag.appendChild(document.createTextNode(part))
            }
        })
        node.parentNode.replaceChild(frag, node)
    } else if (node.tagName != 'U' && !node.classList.contains('nospell')) {
        Array.from(node.childNodes).forEach(mark)
    }
}
document.querySelectorAll('.page .line, .page h2').forEach(mark)
```
